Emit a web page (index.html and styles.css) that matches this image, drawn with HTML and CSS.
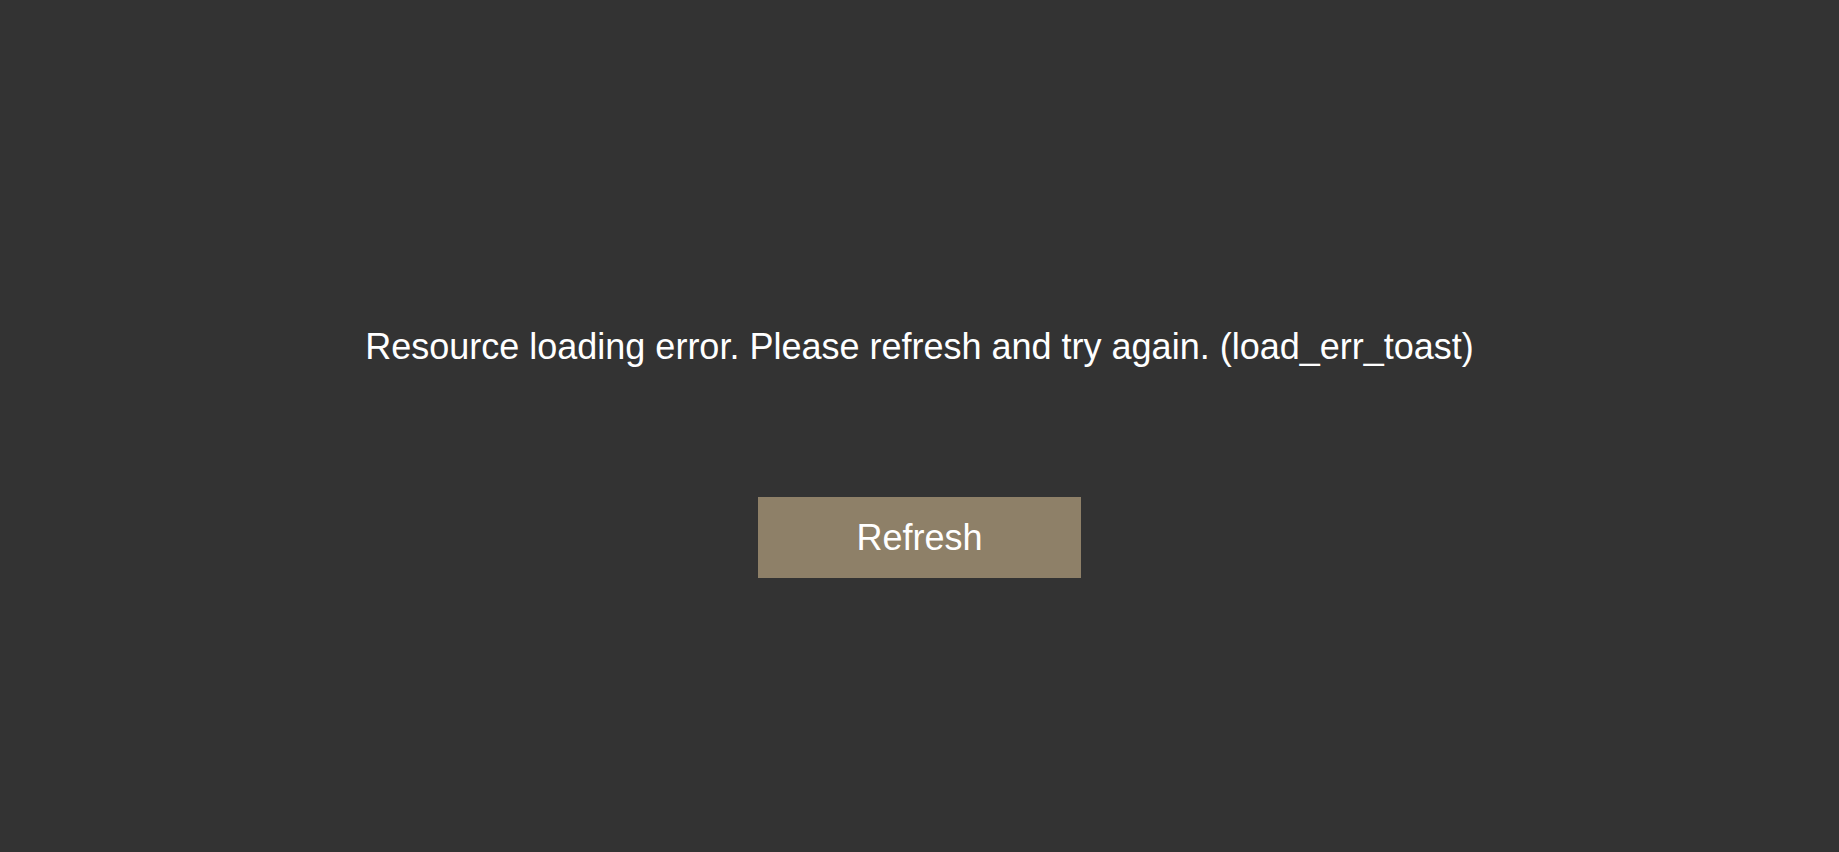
FILE: index.html
```html
<!DOCTYPE html>
<html>
<head>
<meta charset="utf-8">
<link rel="stylesheet" href="styles.css">
</head>
<body>
<div class="page">
  <p class="message">Resource loading error. Please refresh and try again. (load_err_toast)</p>
  <button class="refresh">Refresh</button>
</div>
</body>
</html>
```
FILE: styles.css
```css
html, body {
  margin: 0;
  padding: 0;
  height: 100%;
  background: #333333;
}
.page {
  display: flex;
  flex-direction: column;
  align-items: center;
  padding-top: 325px;
  font-family: "Liberation Sans", Arial, sans-serif;
  color: #ffffff;
}
.message {
  margin: 0;
  font-size: 36px;
  line-height: 44px;
}
.refresh {
  margin-top: 128px;
  width: 323px;
  height: 81px;
  border: none;
  background: #8e8068;
  color: #ffffff;
  font-family: "Liberation Sans", Arial, sans-serif;
  font-size: 36px;
  padding: 0;
}
```
